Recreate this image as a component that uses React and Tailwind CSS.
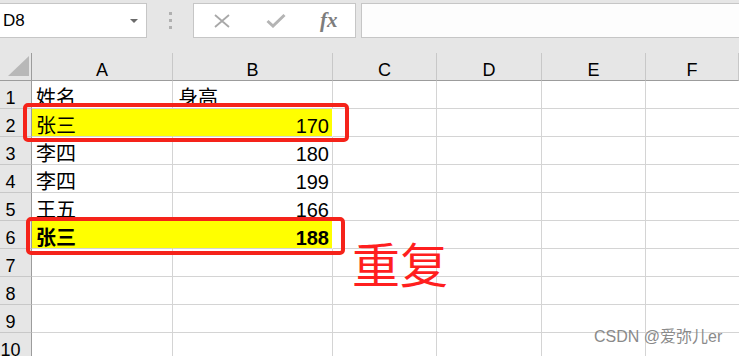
import React from 'react';

const cols = ['A', 'B', 'C', 'D', 'E', 'F'];

const rows = [
  { n: 1, a: '姓名', b: '身高', bLeft: true },
  { n: 2, a: '张三', b: '170', fill: true },
  { n: 3, a: '李四', b: '180' },
  { n: 4, a: '李四', b: '199' },
  { n: 5, a: '王五', b: '166' },
  { n: 6, a: '张三', b: '188', fill: true, bold: true },
  { n: 7 },
  { n: 8 },
  { n: 9 },
  { n: 10 },
];

const font = { fontFamily: '"Liberation Sans", "Noto Sans CJK SC", sans-serif' };

const App = () => {
  return (
    <div className="relative w-[739px] h-[356px] overflow-hidden bg-[#e6e6e6]" style={font}>
      {/* Formula bar */}
      <div className="flex items-start h-[53px] pt-[3px]">
        <div className="relative w-[147px] h-[35px] bg-white border border-l-0 border-[#c6c6c6] flex items-center pl-[3px] text-[17px] text-black">
          D8
          <div className="absolute left-[130px] top-[15px] w-0 h-0 border-l-[4px] border-r-[4px] border-t-[4px] border-l-transparent border-r-transparent border-t-[#6b6b6b]"></div>
        </div>
        <div className="w-[46px] h-[35px] flex flex-col items-center justify-center gap-[4px]">
          <div className="w-[3px] h-[3px] bg-[#b0b0b0]"></div>
          <div className="w-[3px] h-[3px] bg-[#b0b0b0]"></div>
          <div className="w-[3px] h-[3px] bg-[#b0b0b0]"></div>
        </div>
        <div className="w-[163px] h-[35px] bg-white border border-[#c6c6c6] flex items-center">
          <svg width="18" height="14" viewBox="0 0 18 14" className="ml-[19px]">
            <path d="M2 1 L16 13 M16 1 L2 13" stroke="#a8a8a8" strokeWidth="1.8" fill="none" />
          </svg>
          <svg width="20" height="15" viewBox="0 0 20 15" className="ml-[35px]">
            <path d="M1.5 8 L7 13 L18.5 2" stroke="#b4b4b4" strokeWidth="3" fill="none" />
          </svg>
          <span
            className="ml-[34px] text-[21px] italic font-bold text-[#7d7d7d] leading-none"
            style={{ fontFamily: '"Liberation Serif", serif' }}
          >
            fx
          </span>
        </div>
        <div className="ml-[5px] flex-1 h-[35px] bg-[#fdfdfd] border border-r-0 border-[#c6c6c6]"></div>
      </div>

      {/* Sheet grid */}
      <div className="grid grid-cols-[32px_141px_160px_104px_105px_104px_1fr]">
        {/* column header */}
        <div className="relative h-[28px] bg-[#e6e6e6] border-r border-b border-[#9c9c9c]">
          <svg width="24" height="22" viewBox="0 0 24 22" className="absolute left-[7px] top-[3px]">
            <path d="M22 0 L22 20 L1 20 Z" fill="#b8b8b8" />
          </svg>
        </div>
        {cols.map((c) => (
          <div
            key={c}
            className="h-[28px] bg-[#e6e6e6] border-r border-b border-r-[#c8c8c8] border-b-[#9c9c9c] flex items-end justify-center pb-[1px] text-[18px] leading-[18px] text-black"
          >
            {c}
          </div>
        ))}

        {rows.map((r) => (
          <React.Fragment key={r.n}>
            <div className="h-[28px] bg-[#e6e6e6] border-r border-b border-r-[#9c9c9c] border-b-[#c8c8c8] flex items-end pb-[1px] text-[18px] leading-[18px] text-black">
              <div className="w-[21px] text-center">{r.n}</div>
            </div>
            <div
              className={`h-[28px] border-r border-b flex items-end pl-[4px] text-[20px] leading-[20px] text-black ${
                r.fill ? 'bg-[#ffff00] border-r-[#ffff00] border-b-[#d4d4d4]' : 'bg-white border-[#d4d4d4]'
              } ${r.bold ? 'font-bold' : ''}`}
            >
              {r.a}
            </div>
            <div
              className={`h-[28px] border-r border-b flex items-end text-[20px] leading-[20px] text-black ${
                r.bLeft ? 'pl-[5px]' : 'justify-end pr-[3px]'
              } ${r.fill ? 'bg-[#ffff00] border-r-white border-b-[#d4d4d4]' : 'bg-white border-[#d4d4d4]'} ${
                r.bold ? 'font-bold' : ''
              }`}
            >
              {r.b}
            </div>
            <div className="h-[28px] bg-white border-r border-b border-[#d4d4d4]"></div>
            <div className="h-[28px] bg-white border-r border-b border-[#d4d4d4]"></div>
            <div className="h-[28px] bg-white border-r border-b border-[#d4d4d4]"></div>
            <div className="h-[28px] bg-white border-b border-[#d4d4d4]"></div>
          </React.Fragment>
        ))}
      </div>

      {/* annotations */}
      <div className="absolute left-[23px] top-[103px] w-[326px] h-[39px] border-[4px] border-[#f5231a] rounded-[5px]"></div>
      <div className="absolute left-[26px] top-[217px] w-[319px] h-[38px] border-[4px] border-[#f5231a] rounded-[5px]"></div>
      <div
        className="absolute left-[352px] top-[238px] text-[48px] leading-[48px] text-[#ff1f1f]"
        style={{ fontFamily: '"Noto Sans CJK SC", sans-serif' }}
      >
        重复
      </div>
      <div className="absolute left-[594px] top-[327px] text-[16px] leading-[19px] text-[#8a8a8a]">
        CSDN @爱弥儿er
      </div>
    </div>
  );
};

export default App;
